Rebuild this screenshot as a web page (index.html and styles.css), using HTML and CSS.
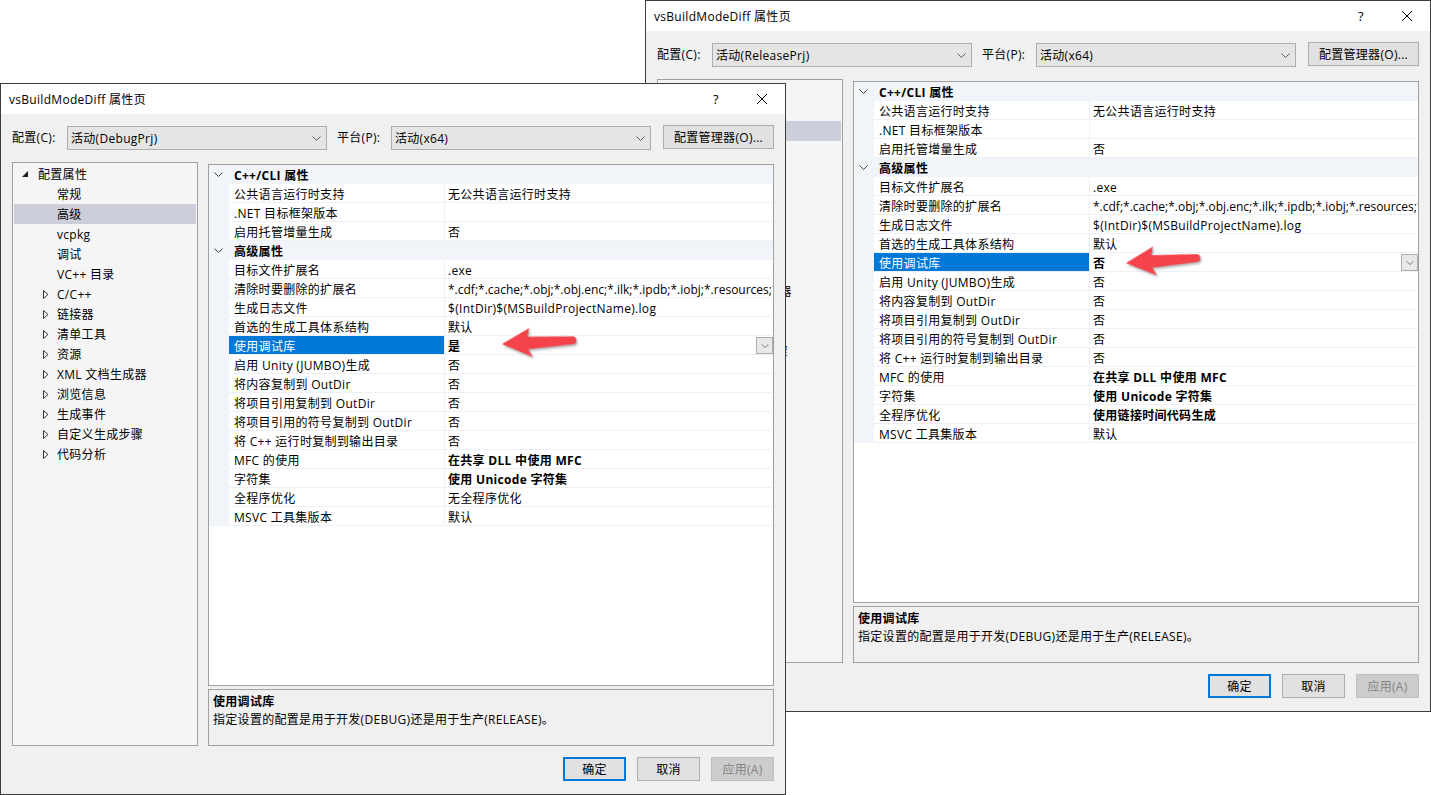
FILE: index.html
```html
<!DOCTYPE html>
<html lang="zh-CN">

<head>
  <meta charset="UTF-8">
  <title>vsBuildModeDiff 属性页</title>
  <link rel="stylesheet" href="styles.css">
</head>

<body>
  <!-- Release 配置窗口（后面） -->
  <div class="dlg dlg-release">
    <div class="caption">
      <span class="caption-title">vsBuildModeDiff 属性页</span>
      <span class="caption-btn">?</span>
      <span class="caption-btn"><svg class="ico-close" viewBox="0 0 10 10"><path d="M0 0L10 10M10 0L0 10"/></svg></span>
    </div>
    <div class="dlg-body">
      <div class="cfg-row">
        <span class="cfg-label">配置(C):</span>
        <div class="combo"><span class="combo-text">活动(ReleasePrj)</span><svg class="chev" viewBox="0 0 9 5"><path d="M0.5 0.5L4.5 4.5L8.5 0.5"/></svg></div>
        <span class="cfg-label cfg-label-plat">平台(P):</span>
        <div class="combo"><span class="combo-text">活动(x64)</span><svg class="chev" viewBox="0 0 9 5"><path d="M0.5 0.5L4.5 4.5L8.5 0.5"/></svg></div>
        <div class="btn btn-mgr">配置管理器(O)...</div>
      </div>
      <div class="main">
        <div class="tree">
          <div class="tree-item lvl0"><span class="twist"><svg class="tri-open" viewBox="0 0 6 6"><path d="M6 0V6H0Z"/></svg></span>配置属性</div>
          <div class="tree-item lvl1"><span class="twist"></span>常规</div>
          <div class="tree-item lvl1 sel"><span class="twist"></span>高级</div>
          <div class="tree-item lvl1"><span class="twist"></span>vcpkg</div>
          <div class="tree-item lvl1"><span class="twist"></span>调试</div>
          <div class="tree-item lvl1"><span class="twist"></span>VC++ 目录</div>
          <div class="tree-item lvl1"><span class="twist"><svg class="tri-closed" viewBox="0 0 6 9"><path d="M0.5 0.5L5 4.5L0.5 8.5Z"/></svg></span>C/C++</div>
          <div class="tree-item lvl1"><span class="twist"><svg class="tri-closed" viewBox="0 0 6 9"><path d="M0.5 0.5L5 4.5L0.5 8.5Z"/></svg></span>链接器</div>
          <div class="tree-item lvl1"><span class="twist"><svg class="tri-closed" viewBox="0 0 6 9"><path d="M0.5 0.5L5 4.5L0.5 8.5Z"/></svg></span>清单工具</div>
          <div class="tree-item lvl1"><span class="twist"><svg class="tri-closed" viewBox="0 0 6 9"><path d="M0.5 0.5L5 4.5L0.5 8.5Z"/></svg></span>资源</div>
          <div class="tree-item lvl1"><span class="twist"><svg class="tri-closed" viewBox="0 0 6 9"><path d="M0.5 0.5L5 4.5L0.5 8.5Z"/></svg></span>XML 文档生成器</div>
          <div class="tree-item lvl1"><span class="twist"><svg class="tri-closed" viewBox="0 0 6 9"><path d="M0.5 0.5L5 4.5L0.5 8.5Z"/></svg></span>浏览信息</div>
          <div class="tree-item lvl1"><span class="twist"><svg class="tri-closed" viewBox="0 0 6 9"><path d="M0.5 0.5L5 4.5L0.5 8.5Z"/></svg></span>生成事件</div>
          <div class="tree-item lvl1"><span class="twist"><svg class="tri-closed" viewBox="0 0 6 9"><path d="M0.5 0.5L5 4.5L0.5 8.5Z"/></svg></span>自定义生成步骤</div>
          <div class="tree-item lvl1"><span class="twist"><svg class="tri-closed" viewBox="0 0 6 9"><path d="M0.5 0.5L5 4.5L0.5 8.5Z"/></svg></span>代码分析</div>
        </div>
        <div class="side">
          <div class="grid">
            <div class="row cat"><span class="gut"><svg class="chev chev-cat" viewBox="0 0 9 5"><path d="M0.5 0.5L4.5 4.5L8.5 0.5"/></svg></span><span class="cat-name">C++/CLI 属性</span></div>
            <div class="row"><span class="gut"></span><span class="name">公共语言运行时支持</span><span class="val">无公共语言运行时支持</span></div>
            <div class="row"><span class="gut"></span><span class="name">.NET 目标框架版本</span><span class="val"></span></div>
            <div class="row"><span class="gut"></span><span class="name">启用托管增量生成</span><span class="val">否</span></div>
            <div class="row cat"><span class="gut"><svg class="chev chev-cat" viewBox="0 0 9 5"><path d="M0.5 0.5L4.5 4.5L8.5 0.5"/></svg></span><span class="cat-name">高级属性</span></div>
            <div class="row"><span class="gut"></span><span class="name">目标文件扩展名</span><span class="val">.exe</span></div>
            <div class="row"><span class="gut"></span><span class="name">清除时要删除的扩展名</span><span class="val val-tight">*.cdf;*.cache;*.obj;*.obj.enc;*.ilk;*.ipdb;*.iobj;*.resources;*.tlb;*.tli;*.tlh;*.tmp;*.rsp;*.pgc;*.pgd;*.meta;*.tlog;*.manifest;*.res;*.pch;*.exp;*.idb;*.rep;*.xdc;*.pdb;*_manifest.rc;*.bsc;*.sbr;*.xml;*.metagen;*.bi</span></div>
            <div class="row"><span class="gut"></span><span class="name">生成日志文件</span><span class="val">$(IntDir)$(MSBuildProjectName).log</span></div>
            <div class="row"><span class="gut"></span><span class="name">首选的生成工具体系结构</span><span class="val">默认</span></div>
            <div class="row"><span class="gut"></span><span class="name sel">使用调试库</span><span class="val"><span class="val-text b">否</span><span class="drop"><svg class="chev chev-drop" viewBox="0 0 9 5"><path d="M0.5 0.5L4.5 4.5L8.5 0.5"/></svg></span></span></div>
            <div class="row"><span class="gut"></span><span class="name">启用 Unity (JUMBO)生成</span><span class="val">否</span></div>
            <div class="row"><span class="gut"></span><span class="name">将内容复制到 OutDir</span><span class="val">否</span></div>
            <div class="row"><span class="gut"></span><span class="name">将项目引用复制到 OutDir</span><span class="val">否</span></div>
            <div class="row"><span class="gut"></span><span class="name">将项目引用的符号复制到 OutDir</span><span class="val">否</span></div>
            <div class="row"><span class="gut"></span><span class="name">将 C++ 运行时复制到输出目录</span><span class="val">否</span></div>
            <div class="row"><span class="gut"></span><span class="name">MFC 的使用</span><span class="val b">在共享 DLL 中使用 MFC</span></div>
            <div class="row"><span class="gut"></span><span class="name">字符集</span><span class="val b">使用 Unicode 字符集</span></div>
            <div class="row"><span class="gut"></span><span class="name">全程序优化</span><span class="val b">使用链接时间代码生成</span></div>
            <div class="row"><span class="gut"></span><span class="name">MSVC 工具集版本</span><span class="val">默认</span></div>
          </div>
          <div class="desc">
            <div class="desc-title">使用调试库</div>
            <div>指定设置的配置是用于开发(DEBUG)还是用于生产(RELEASE)。</div>
          </div>
        </div>
      </div>
      <div class="btn-row">
        <div class="btn btn-def">确定</div>
        <div class="btn">取消</div>
        <div class="btn btn-dis">应用(A)</div>
      </div>
    </div>
  </div>

  <!-- Debug 配置窗口（前面） -->
  <div class="dlg dlg-debug">
    <div class="caption">
      <span class="caption-title">vsBuildModeDiff 属性页</span>
      <span class="caption-btn">?</span>
      <span class="caption-btn"><svg class="ico-close" viewBox="0 0 10 10"><path d="M0 0L10 10M10 0L0 10"/></svg></span>
    </div>
    <div class="dlg-body">
      <div class="cfg-row">
        <span class="cfg-label">配置(C):</span>
        <div class="combo"><span class="combo-text">活动(DebugPrj)</span><svg class="chev" viewBox="0 0 9 5"><path d="M0.5 0.5L4.5 4.5L8.5 0.5"/></svg></div>
        <span class="cfg-label cfg-label-plat">平台(P):</span>
        <div class="combo"><span class="combo-text">活动(x64)</span><svg class="chev" viewBox="0 0 9 5"><path d="M0.5 0.5L4.5 4.5L8.5 0.5"/></svg></div>
        <div class="btn btn-mgr">配置管理器(O)...</div>
      </div>
      <div class="main">
        <div class="tree">
          <div class="tree-item lvl0"><span class="twist"><svg class="tri-open" viewBox="0 0 6 6"><path d="M6 0V6H0Z"/></svg></span>配置属性</div>
          <div class="tree-item lvl1"><span class="twist"></span>常规</div>
          <div class="tree-item lvl1 sel"><span class="twist"></span>高级</div>
          <div class="tree-item lvl1"><span class="twist"></span>vcpkg</div>
          <div class="tree-item lvl1"><span class="twist"></span>调试</div>
          <div class="tree-item lvl1"><span class="twist"></span>VC++ 目录</div>
          <div class="tree-item lvl1"><span class="twist"><svg class="tri-closed" viewBox="0 0 6 9"><path d="M0.5 0.5L5 4.5L0.5 8.5Z"/></svg></span>C/C++</div>
          <div class="tree-item lvl1"><span class="twist"><svg class="tri-closed" viewBox="0 0 6 9"><path d="M0.5 0.5L5 4.5L0.5 8.5Z"/></svg></span>链接器</div>
          <div class="tree-item lvl1"><span class="twist"><svg class="tri-closed" viewBox="0 0 6 9"><path d="M0.5 0.5L5 4.5L0.5 8.5Z"/></svg></span>清单工具</div>
          <div class="tree-item lvl1"><span class="twist"><svg class="tri-closed" viewBox="0 0 6 9"><path d="M0.5 0.5L5 4.5L0.5 8.5Z"/></svg></span>资源</div>
          <div class="tree-item lvl1"><span class="twist"><svg class="tri-closed" viewBox="0 0 6 9"><path d="M0.5 0.5L5 4.5L0.5 8.5Z"/></svg></span>XML 文档生成器</div>
          <div class="tree-item lvl1"><span class="twist"><svg class="tri-closed" viewBox="0 0 6 9"><path d="M0.5 0.5L5 4.5L0.5 8.5Z"/></svg></span>浏览信息</div>
          <div class="tree-item lvl1"><span class="twist"><svg class="tri-closed" viewBox="0 0 6 9"><path d="M0.5 0.5L5 4.5L0.5 8.5Z"/></svg></span>生成事件</div>
          <div class="tree-item lvl1"><span class="twist"><svg class="tri-closed" viewBox="0 0 6 9"><path d="M0.5 0.5L5 4.5L0.5 8.5Z"/></svg></span>自定义生成步骤</div>
          <div class="tree-item lvl1"><span class="twist"><svg class="tri-closed" viewBox="0 0 6 9"><path d="M0.5 0.5L5 4.5L0.5 8.5Z"/></svg></span>代码分析</div>
        </div>
        <div class="side">
          <div class="grid">
            <div class="row cat"><span class="gut"><svg class="chev chev-cat" viewBox="0 0 9 5"><path d="M0.5 0.5L4.5 4.5L8.5 0.5"/></svg></span><span class="cat-name">C++/CLI 属性</span></div>
            <div class="row"><span class="gut"></span><span class="name">公共语言运行时支持</span><span class="val">无公共语言运行时支持</span></div>
            <div class="row"><span class="gut"></span><span class="name">.NET 目标框架版本</span><span class="val"></span></div>
            <div class="row"><span class="gut"></span><span class="name">启用托管增量生成</span><span class="val">否</span></div>
            <div class="row cat"><span class="gut"><svg class="chev chev-cat" viewBox="0 0 9 5"><path d="M0.5 0.5L4.5 4.5L8.5 0.5"/></svg></span><span class="cat-name">高级属性</span></div>
            <div class="row"><span class="gut"></span><span class="name">目标文件扩展名</span><span class="val">.exe</span></div>
            <div class="row"><span class="gut"></span><span class="name">清除时要删除的扩展名</span><span class="val val-tight">*.cdf;*.cache;*.obj;*.obj.enc;*.ilk;*.ipdb;*.iobj;*.resources;*.tlb;*.tli;*.tlh;*.tmp;*.rsp;*.pgc;*.pgd;*.meta;*.tlog;*.manifest;*.res;*.pch;*.exp;*.idb;*.rep;*.xdc;*.pdb;*_manifest.rc;*.bsc;*.sbr;*.xml;*.metagen;*.bi</span></div>
            <div class="row"><span class="gut"></span><span class="name">生成日志文件</span><span class="val">$(IntDir)$(MSBuildProjectName).log</span></div>
            <div class="row"><span class="gut"></span><span class="name">首选的生成工具体系结构</span><span class="val">默认</span></div>
            <div class="row"><span class="gut"></span><span class="name sel">使用调试库</span><span class="val"><span class="val-text b">是</span><span class="drop"><svg class="chev chev-drop" viewBox="0 0 9 5"><path d="M0.5 0.5L4.5 4.5L8.5 0.5"/></svg></span></span></div>
            <div class="row"><span class="gut"></span><span class="name">启用 Unity (JUMBO)生成</span><span class="val">否</span></div>
            <div class="row"><span class="gut"></span><span class="name">将内容复制到 OutDir</span><span class="val">否</span></div>
            <div class="row"><span class="gut"></span><span class="name">将项目引用复制到 OutDir</span><span class="val">否</span></div>
            <div class="row"><span class="gut"></span><span class="name">将项目引用的符号复制到 OutDir</span><span class="val">否</span></div>
            <div class="row"><span class="gut"></span><span class="name">将 C++ 运行时复制到输出目录</span><span class="val">否</span></div>
            <div class="row"><span class="gut"></span><span class="name">MFC 的使用</span><span class="val b">在共享 DLL 中使用 MFC</span></div>
            <div class="row"><span class="gut"></span><span class="name">字符集</span><span class="val b">使用 Unicode 字符集</span></div>
            <div class="row"><span class="gut"></span><span class="name">全程序优化</span><span class="val">无全程序优化</span></div>
            <div class="row"><span class="gut"></span><span class="name">MSVC 工具集版本</span><span class="val">默认</span></div>
          </div>
          <div class="desc">
            <div class="desc-title">使用调试库</div>
            <div>指定设置的配置是用于开发(DEBUG)还是用于生产(RELEASE)。</div>
          </div>
        </div>
      </div>
      <div class="btn-row">
        <div class="btn btn-def">确定</div>
        <div class="btn">取消</div>
        <div class="btn btn-dis">应用(A)</div>
      </div>
    </div>
  </div>

  <!-- 标注箭头 -->
  <svg class="arrow arrow-debug" viewBox="0 0 80 32"><path d="M1 16L29 1.5L27 10L71 12Q75.5 12.2 75.5 16Q75.5 19.8 71 20L27 22.5L31 30.5Z"/></svg>
  <svg class="arrow arrow-release" viewBox="0 0 80 32"><path d="M1 16L29 1.5L27 10L71 12Q75.5 12.2 75.5 16Q75.5 19.8 71 20L27 22.5L31 30.5Z"/></svg>
</body>

</html>
```

FILE: styles.css
```css
* {
  box-sizing: border-box;
}

html,
body {
  margin: 0;
}

body {
  position: relative;
  width: 1431px;
  height: 795px;
  overflow: hidden;
  background-color: #ffffff;
  color: #000000;
  font-family: "Open Sans", "Noto Sans CJK SC", sans-serif;
  font-size: 12px;
  letter-spacing: 0.3px;
}

/* 窗口 */
.dlg {
  position: absolute;
  width: 786px;
  height: 712px;
  border: 1px solid #3b3b3b;
  background-color: #f0f0f0;
  display: flex;
  flex-direction: column;
}

.dlg-release {
  left: 645px;
  top: 0;
}

.dlg-debug {
  left: 0;
  top: 83px;
}

.caption {
  height: 30px;
  background-color: #ffffff;
  display: flex;
  align-items: center;
}

.caption-title {
  flex: 1;
  padding-left: 8px;
}

.caption-btn {
  width: 46px;
  height: 30px;
  display: flex;
  align-items: center;
  justify-content: center;
  font-size: 13px;
}

.ico-close {
  width: 10px;
  height: 10px;
  stroke: #000000;
  stroke-width: 1;
}

.dlg-body {
  flex: 1;
  padding: 11px 11px 13px 11px;
  display: flex;
  flex-direction: column;
}

/* 配置行 */
.cfg-row {
  height: 25px;
  display: flex;
  align-items: flex-start;
}

.cfg-label {
  width: 55px;
  height: 25px;
  line-height: 25px;
  white-space: nowrap;
}

.cfg-label-plat {
  width: 54px;
  margin-left: 10px;
}

.combo {
  width: 260px;
  height: 24px;
  margin-top: 1px;
  padding: 0 5px 0 3px;
  border: 1px solid #adadad;
  background-color: #e5e5e5;
  display: flex;
  align-items: center;
}

.combo-text {
  flex: 1;
  white-space: nowrap;
}

.chev {
  width: 9px;
  height: 5px;
  fill: none;
  stroke: #5a5a5a;
  stroke-width: 1;
}

.btn {
  width: 63px;
  height: 24px;
  border: 1px solid #adadad;
  background-color: #e1e1e1;
  display: flex;
  align-items: center;
  justify-content: center;
  white-space: nowrap;
}

.btn-mgr {
  width: 111px;
  margin-left: 12px;
}

.btn-def {
  border: 2px solid #0078d7;
}

.btn-dis {
  border-color: #bfbfbf;
  background-color: #cccccc;
  color: #838383;
}

/* 主体 */
.main {
  height: 584px;
  margin-top: 12px;
  display: flex;
  gap: 10px;
}

.tree {
  width: 186px;
  padding: 1px;
  border: 1px solid #a0a0a0;
  background-color: #f5f5f5;
  overflow: hidden;
}

.tree-item {
  height: 20px;
  display: flex;
  align-items: center;
  white-space: nowrap;
}

.tree-item.sel {
  background-color: #cccedb;
}

.lvl0 {
  padding-left: 8px;
}

.lvl0 .twist {
  width: 16px;
}

.lvl1 {
  padding-left: 29px;
}

.lvl1 .twist {
  width: 14px;
}

.twist {
  height: 20px;
  display: flex;
  align-items: center;
  flex-shrink: 0;
}

.tri-open {
  width: 6px;
  height: 6px;
  fill: #1e1e1e;
}

.tri-closed {
  width: 6px;
  height: 9px;
  fill: none;
  stroke: #333333;
  stroke-width: 1;
}

.side {
  width: 566px;
  display: flex;
  flex-direction: column;
}

.grid {
  height: 522px;
  margin-top: 2px;
  border: 1px solid #a0a0a0;
  background-color: #ffffff;
  overflow: hidden;
}

.row {
  height: 19px;
  line-height: 18px;
  display: flex;
}

.gut {
  width: 20px;
  flex-shrink: 0;
  padding-left: 5px;
  background-color: #f1f4f9;
  display: flex;
  align-items: center;
}

.name {
  width: 216px;
  flex-shrink: 0;
  padding: 2px 0 0 5px;
  border-right: 1px solid #edf0f5;
  border-bottom: 1px solid #edf0f5;
  white-space: nowrap;
  overflow: hidden;
}

.name.sel {
  background-color: #0078d7;
  color: #ffffff;
}

.val {
  flex: 1;
  min-width: 0;
  padding: 2px 0 0 3px;
  border-bottom: 1px solid #edf0f5;
  white-space: nowrap;
  overflow: hidden;
  display: flex;
}

.val-tight {
  letter-spacing: 0;
}

.val-text {
  flex: 1;
}

.b {
  font-weight: bold;
}

.drop {
  width: 17px;
  height: 17px;
  margin-top: -1px;
  border: 1px solid #adadad;
  background-color: #e8e8e8;
  display: flex;
  align-items: center;
  justify-content: center;
}

.chev-drop {
  width: 8px;
  height: 4px;
}

.row.cat {
  background-color: #f1f4f9;
  font-weight: bold;
}

.cat-name {
  padding: 2px 0 0 5px;
}

.chev-cat {
  stroke: #404040;
}

.desc {
  height: 57px;
  margin-top: 3px;
  padding: 3px 4px;
  border: 1px solid #a0a0a0;
  background-color: #f0f0f0;
  line-height: 18px;
}

.desc-title {
  font-weight: bold;
}

.btn-row {
  margin-top: 11px;
  display: flex;
  justify-content: flex-end;
  gap: 11px;
}

/* 标注箭头 */
.arrow {
  position: absolute;
  width: 80px;
  height: 32px;
  fill: #f4434a;
  transform-origin: 1px 16px;
  filter: drop-shadow(1px 2px 1px rgba(0, 0, 0, 0.3));
}

.arrow-debug {
  left: 501px;
  top: 328px;
  transform: rotate(-3deg);
}

.arrow-release {
  left: 1125px;
  top: 247px;
  transform: rotate(-4deg);
}
```
